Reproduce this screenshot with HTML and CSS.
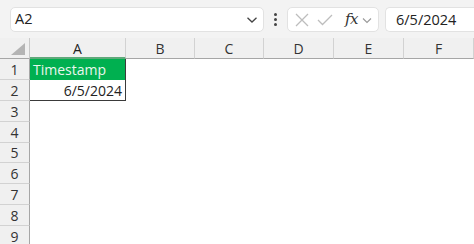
FILE: index.html
```html
<!DOCTYPE html>
<html>
<head>
<meta charset="utf-8">
<link rel="stylesheet" href="styles.css">
</head>
<body>
<div class="app">
  <div class="toolbar">
    <div class="namebox">
      <span class="name-text">A2</span>
      <svg class="chev" width="12" height="8" viewBox="0 0 12 8"><path d="M1.5 1.8 L6 6 L10.5 1.8" fill="none" stroke="#444" stroke-width="1.3"/></svg>
    </div>
    <div class="dots"><span></span><span></span><span></span></div>
    <div class="fbtns">
      <svg class="ic-x" width="14" height="14" viewBox="0 0 14 14"><path d="M1 1 L13 13 M13 1 L1 13" stroke="#bdbdbd" stroke-width="1.3" fill="none"/></svg>
      <svg class="ic-check" width="16" height="12" viewBox="0 0 16 12"><path d="M1 6 L5.5 10.5 L15 1" stroke="#bdbdbd" stroke-width="1.3" fill="none"/></svg>
      <span class="fx">fx</span>
      <svg class="chev-s" width="10" height="7" viewBox="0 0 10 7"><path d="M1 1.5 L5 5.5 L9 1.5" fill="none" stroke="#999" stroke-width="1.1"/></svg>
    </div>
    <div class="formula">6/5/2024</div>
  </div>
  <div class="sheet">
    <div class="corner"><span class="tri"></span></div>
    <div class="ch ch-sel">A</div>
    <div class="ch">B</div>
    <div class="ch">C</div>
    <div class="ch">D</div>
    <div class="ch">E</div>
    <div class="ch">F</div>

    <div class="rh">1</div>
    <div class="cell c-head">Timestamp</div>
    <div class="cell"></div><div class="cell"></div><div class="cell"></div><div class="cell"></div><div class="cell"></div>

    <div class="rh rh-sel">2</div>
    <div class="cell c-date">6/5/2024</div>
    <div class="cell"></div><div class="cell"></div><div class="cell"></div><div class="cell"></div><div class="cell"></div>

    <div class="rh">3</div><div class="cell span"></div>
    <div class="rh">4</div><div class="cell span"></div>
    <div class="rh">5</div><div class="cell span"></div>
    <div class="rh">6</div><div class="cell span"></div>
    <div class="rh">7</div><div class="cell span"></div>
    <div class="rh">8</div><div class="cell span"></div>
    <div class="rh">9</div><div class="cell span"></div>
  </div>
</div>
</body>
</html>
```
FILE: styles.css
```css
* { box-sizing: border-box; }
html, body { margin: 0; padding: 0; }
body {
  width: 474px;
  height: 244px;
  overflow: hidden;
  background: #ffffff;
  font-family: "Open Sans", "Noto Sans", "Liberation Sans", sans-serif;
  color: #222;
}
.app { width: 474px; height: 244px; overflow: hidden; }

.toolbar {
  height: 38px;
  background: #f3f3f3;
  display: flex;
  align-items: flex-start;
  padding: 7px 0 0 10px;
  gap: 0;
}
.namebox {
  width: 254px;
  height: 25px;
  background: #fff;
  border: 1px solid #e2e2e2;
  border-radius: 5px;
  display: flex;
  align-items: center;
  justify-content: space-between;
  padding: 0 5px 0 4px;
}
.name-text { font-size: 14.5px; color: #222; line-height: 1; }
.chev { margin-right: 0; }
.dots {
  width: 23px;
  height: 25px;
  display: flex;
  flex-direction: column;
  align-items: center;
  justify-content: center;
  gap: 2px;
}
.dots span { width: 3px; height: 3px; border-radius: 50%; background: #444; display: block; }
.fbtns {
  width: 92px;
  height: 25px;
  background: #fff;
  border: 1px solid #e2e2e2;
  border-radius: 5px;
  display: flex;
  align-items: center;
  padding-left: 7px;
}
.ic-x { margin-right: 8px; }
.ic-check { margin-right: 12px; }
.fx {
  font-family: "DejaVu Serif", "Liberation Serif", serif;
  font-style: italic;
  font-size: 15px;
  color: #333;
  letter-spacing: -0.5px;
  line-height: 1;
  margin-right: 4px;
}
.chev-s { margin-top: 1px; }
.formula {
  margin-left: 6px;
  flex: 1;
  height: 25px;
  background: #fff;
  border: 1px solid #e2e2e2;
  border-right: none;
  border-radius: 5px 0 0 5px;
  display: flex;
  align-items: center;
  padding-left: 10px;
  font-size: 14.5px;
  color: #222;
}

.sheet {
  display: grid;
  grid-template-columns: 30px 96px 69px 69px 70px 70px 70px;
  grid-template-rows: 21px 21px 21px 21px 21px 20px 21px 21px 21px 21px;
  background: #fff;
}
.corner {
  background: #f0f0f0;
  border-right: 1px solid #c8c8c8;
  border-bottom: 1px solid #a6a6a6;
  position: relative;
}
.tri {
  position: absolute;
  right: 4px;
  bottom: 3px;
  width: 0; height: 0;
  border-left: 14px solid transparent;
  border-bottom: 12px solid #b4b4b4;
}
.ch {
  background: #f0f0f0;
  border-right: 1px solid #d2d2d2;
  border-bottom: 1px solid #a6a6a6;
  display: flex;
  align-items: center;
  justify-content: center;
  font-size: 14px;
  color: #333;
  padding-top: 1px;
}
.ch-sel { border-bottom: 2px solid #5fa97a; color: #222; }
.rh {
  background: #f0f0f0;
  border-right: 1px solid #a6a6a6;
  border-bottom: 1px solid #d2d2d2;
  display: flex;
  align-items: center;
  justify-content: center;
  font-size: 14px;
  color: #333;
}
.cell { background: #fff; }
.span { grid-column: 2 / 8; }
.c-head {
  background: #00b050;
  color: #eaf7ee;
  font-size: 14px;
  display: flex;
  align-items: center;
  padding-left: 3px;
  border-right: 1px solid #3a3a3a;
}
.c-date {
  font-size: 14px;
  color: #222;
  display: flex;
  align-items: center;
  justify-content: flex-end;
  padding-right: 3px;
  border-right: 1px solid #3a3a3a;
  border-bottom: 1px solid #3a3a3a;
}
```
